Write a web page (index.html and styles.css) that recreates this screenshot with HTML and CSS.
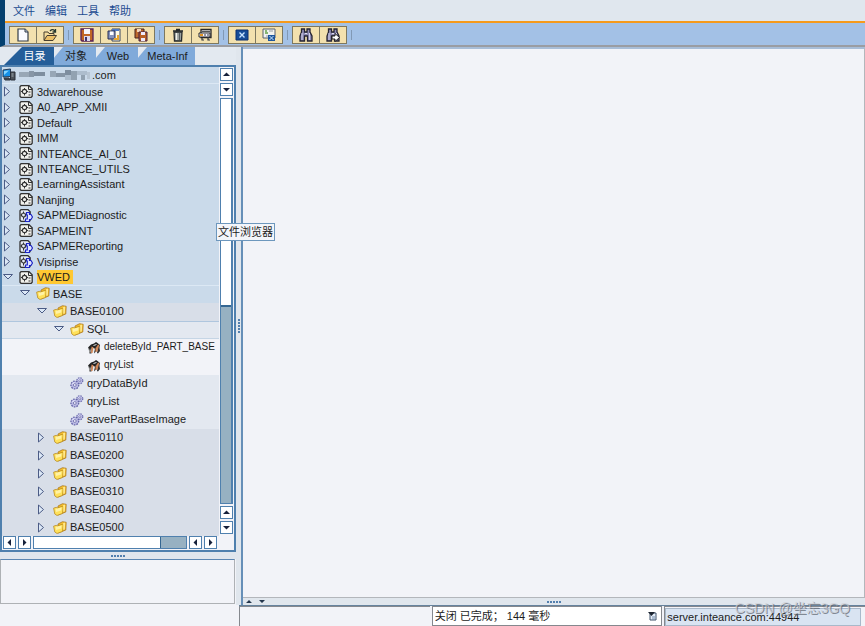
FILE: index.html
```
<!DOCTYPE html>
<html lang="zh-CN">
<head>
    <meta charset="UTF-8">
    <meta name="viewport" content="width=device-width, initial-scale=1.0">
    <title>Workbench</title>
    <link rel="stylesheet" href="styles.css">
</head>
<body>

    <!-- shared icons -->
    <svg class="defs" aria-hidden="true">
        <symbol id="right" viewBox="0 0 10 11"><path d="M1.500 1v9l5-4.500z" fill="#dce8f6" stroke="#4b5b85"/></symbol>
        <symbol id="down" viewBox="0 0 10 11"><path d="M.5 2.500h9l-4.500 4.500z" fill="#dce8f6" stroke="#4b5b85"/></symbol>
        <symbol id="project" viewBox="0 0 14 13">
            <path d="M2 .7h8l3.200 3v7.600l-1 1H2l-1-1V1.700z" fill="#f1f1ec" stroke="#333" stroke-width="1.300"/>
            <path d="M9.500 1v3.500H13" fill="none" stroke="#333"/>
            <circle cx="5.500" cy="6.500" r="2.200" fill="none" stroke="#333" stroke-width="1.200"/>
            <path d="M5.500 3v2M5.500 8v2.500M2 6.500h2M7 6.500h2M9.500 7h2M9.500 10h2" stroke="#333"/>
        </symbol>
        <symbol id="module" viewBox="0 0 14 13">
            <path d="M2 .7h7l2.200 2v8.600l-1 1H2l-1-1V1.700z" fill="#e6eaf5" stroke="#333" stroke-width="1.300"/>
            <circle cx="4.500" cy="6" r="2" fill="none" stroke="#333" stroke-width="1.200"/>
            <path d="M4.500 2.500v2M4.500 8v2.500M1.500 6h1.500" stroke="#333"/>
            <path d="M7.500 3.500h3v2h1.500l1.500 2.500-1.500 2.500h-1.500v2H6.500V10h1.800V6H7.500z" fill="#dfe4ff" stroke="#1d25c4" stroke-width="1.200"/>
        </symbol>
        <symbol id="folder" viewBox="0 0 14 13">
            <path d="M5 3l4.500-2.300 3.700.6-.4 7.700L5 12z" fill="#f3bd2c" stroke="#a36f14" stroke-width=".7"/>
            <path d="M.6 5.200l2.600-.9 1 .7 5-1.600.9.800-.5 6.200L4 12.500 1.800 11z" fill="#ffe15a" stroke="#b38319" stroke-width=".7"/>
            <path d="M10.200 2l2-.4-.4 6.600-1.500.8z" fill="#ffe98c"/>
            <path d="M2.500 6l6-1.500-.3 3L3 9z" fill="#fff2a6"/>
        </symbol>
        <symbol id="query" viewBox="0 0 14 13">
            <path d="M1 6.500l3-3 3-1 2-1.500 1.500 1L13 4l-1 3-4 .5-2-.5-3.500 1z" fill="#222"/>
            <path d="M1.500 7h3v5.500h-2zM8 6l4-2 1 6-2 2.500-1-.5.500-3-3.500 3.500z" fill="#333"/>
            <path d="M4.500 5.500l2 .7-1 5.800H4zM8.500 7.500l2.500-4 1.200.6-1.700 6.400-2 .5z" fill="#d28757"/>
            <path d="M6.500 4.500l3-1M3 8.500v3M7.200 8l-.7 2.500" stroke="#e4e4e4" fill="none"/>
        </symbol>
        <symbol id="gears" viewBox="0 0 14 13">
            <circle cx="9.800" cy="3.700" r="3" fill="#bfbfe8" stroke="#6767a8" stroke-width="1.200" stroke-dasharray="1.400 1"/>
            <circle cx="4.800" cy="8" r="3.900" fill="#b9b9e4" stroke="#6767a8" stroke-width="1.300" stroke-dasharray="1.600 1.100"/>
            <path d="M2.500 7l2-1.500M8.500 3l1.500-1" stroke="#e9e9ff" stroke-width="1.200"/>
            <circle cx="9.800" cy="3.700" r="1" fill="#f0f0ff" stroke="#6a6aa5" stroke-width=".7"/>
            <circle cx="4.800" cy="8" r="1.400" fill="#f4f4ff" stroke="#6a6aa5" stroke-width=".8"/>
        </symbol>
        <symbol id="server" viewBox="0 0 14 13">
            <path d="M1 2l7.500-1v7.500L1 9z" fill="#1590e8" stroke="#263b55"/>
            <path d="M2 3l5-.6L2 7z" fill="#84d4ff"/>
            <path d="M8.500 4H13v8H8.500zM2 10h5l1 2H3z" fill="#4b5158" stroke="#292f39"/>
            <path d="M9.500 6h2M9.500 8h2" stroke="#a5b0b8"/>
        </symbol>
        <symbol id="floppy" viewBox="0 0 14 14">
            <path d="M1 1h12v12H2L1 12z" fill="#c26624" stroke="#56205a" stroke-width="1.300"/>
            <path d="M4 1h6v5H4z" fill="#f7f5fa"/><path d="M4 8h6v5H4z" fill="#ddd9ef"/><path d="M5 9h2v4H5z" fill="#403467"/>
        </symbol>
        <symbol id="binoculars" viewBox="0 0 14 14">
            <path d="M2.500 1h3v3H8V1h3v3l2 4v5H8.500V8h-3v5H1V8l1.500-4z" fill="#8f8cb5" stroke="#252332" stroke-width="1.300"/>
            <path d="M3 5v7M10.500 5v7" stroke="#d3d1ea"/><path d="M6 5.500h2" stroke="#e2e1ef"/>
        </symbol>
    </svg>

    <header class="header">
        <nav class="menu">
            <a href="#">文件</a>
            <a href="#">编辑</a>
            <a href="#">工具</a>
            <a href="#">帮助</a>
        </nav>
        <div class="toolbar">
            <div class="group">
                <button aria-label="新建"><svg viewBox="0 0 14 14"><path d="M2 1h7l3 3v9H2z" fill="#f9fbff" stroke="#333c48" stroke-width="1.200"/><path d="M9 1v3h3" fill="#bccce0" stroke="#333c48"/></svg></button>
                <button aria-label="打开"><svg viewBox="0 0 14 14"><path d="M1 12V4h4l1 1.500h5V8" fill="#f5dc9c" stroke="#473e30"/><path d="M1 12.500l3-5h9.500l-3.500 5z" fill="#ecbf67" stroke="#473e30"/><path d="M7 3c2-2 3-2 5 0M12.500 1v3h-3" fill="none" stroke="#26372f" stroke-width="1.300"/></svg></button>
            </div>
            <div class="group">
                <button aria-label="保存"><svg><use href="#floppy"/></svg></button>
                <button aria-label="另存为"><svg viewBox="0 0 14 14"><path d="M5 1h8v12H5z" fill="#fffbe7" stroke="#394661"/><path d="M5 2h7" stroke="#517bc5" stroke-width="2"/><path d="M1 3h7v8H1z" fill="#8794bc" stroke="#252c55"/><path d="M3 3.500h3.500V7H3z" fill="#fff"/><path d="M10 7h2v5H7v-2h3z" fill="#e8a62d"/></svg></button>
                <button aria-label="全部保存"><svg viewBox="0 0 14 14"><path d="M1 1h9v9H1z" fill="#bd692d" stroke="#45231c"/><path d="M3 1h4v3H3z" fill="#f3d7bb"/><path d="M5 4h8v9H5z" fill="#b85f24" stroke="#432044"/><path d="M7 4h4v3H7zM7 10h4v3H7z" fill="#eee9fb"/></svg></button>
            </div>
            <div class="group">
                <button aria-label="删除"><svg viewBox="0 0 14 14"><path d="M3 4h8l-.5 9h-7z" fill="#9aa19f" stroke="#252a2d" stroke-width="1.300"/><path d="M2 3h10M5 1.500h4" stroke="#252a2d" stroke-width="1.400"/><path d="M5.500 5v7" stroke="#f2f2ec" stroke-width="1.300"/><path d="M8.500 5v7" stroke="#565d60"/></svg></button>
                <button aria-label="重命名"><svg viewBox="0 0 14 14"><path d="M3 1.500h10v8H3z" fill="#ddd" stroke="#292929" stroke-width="1.300"/><path d="M4 3.500h8" stroke="#555"/><path d="M1 5h11v4H1z" fill="#f6f4ff" stroke="#292929"/><path d="M2 6h3v2H2z" fill="#e3941e"/><path d="M6 7h2M9 7h2M4 10v2h2M10 9v3h2" stroke="#303640" fill="none" stroke-width="1.200"/></svg></button>
            </div>
            <div class="group">
                <button aria-label="关闭"><svg viewBox="0 0 14 14"><path d="M1 2h12v10H1z" fill="#164c98" stroke="#0b2f70"/><path d="M4.500 4.500l5 5M9.500 4.500l-5 5" stroke="#c7e3ff" stroke-width="1.400"/></svg></button>
                <button aria-label="全部关闭"><svg viewBox="0 0 14 14"><path d="M1 1h12v9H1z" fill="#f1f2ef" stroke="#58616c"/><path d="M3 3h2M3 5h3" stroke="#66a14b" stroke-width="1.300"/><path d="M7 3h4M4 8h3" stroke="#989fa7"/><path d="M6 7h7v6H6z" fill="#1c559b"/><path d="M7.500 8l4 4M11.500 8l-4 4" stroke="#c7e3ff"/></svg></button>
            </div>
            <div class="group">
                <button aria-label="查找"><svg><use href="#binoculars"/></svg></button>
                <button aria-label="查找下一个"><svg viewBox="0 0 14 14"><use href="#binoculars"/><path d="M6 8h3V5.500l4.500 4-4.500 4V11H6z" fill="#fff" stroke="#222"/></svg></button>
            </div>
        </div>
    </header>

    <main class="main">
        <aside class="sidebar">
            <div class="tabs" role="tablist">
                <button class="tab active" role="tab" aria-selected="true">目录</button>
                <button class="tab" role="tab">对象</button>
                <button class="tab" role="tab">Web</button>
                <button class="tab wide" role="tab">Meta-Inf</button>
            </div>

            <div class="browser">
                <div class="view">
                    <div class="server">
                        <svg class="icon"><use href="#server"/></svg>
                        <svg class="mask" viewBox="0 0 73 12">
                            <path d="M0 3h10v5H0zM31 2h6v6h-6z" fill="#98a7b6"/>
                            <path d="M10 2h5v6h-5zM37 4h9v4h-9z" fill="#8796a6"/>
                            <path d="M15 3h11v4H15zM46 1h6v5h-6z" fill="#7e8e9f"/>
                            <path d="M46 6h6v5h-6zM58 2h10v4H58z" fill="#adbdcd"/>
                            <path d="M52 2h6v9h-6zM62 6h4v5h-4z" fill="#92a2b1"/>
                            <path d="M68 3h3v7h-3z" fill="#b7c5d3"/>
                        </svg>
                        <span>.com</span>
                    </div>
                    <ul class="tree projects">
                        <li><svg class="arrow"><use href="#right"/></svg><svg class="icon"><use href="#project"/></svg><span>3dwarehouse</span></li>
                        <li><svg class="arrow"><use href="#right"/></svg><svg class="icon"><use href="#project"/></svg><span>A0_APP_XMII</span></li>
                        <li><svg class="arrow"><use href="#right"/></svg><svg class="icon"><use href="#project"/></svg><span>Default</span></li>
                        <li><svg class="arrow"><use href="#right"/></svg><svg class="icon"><use href="#project"/></svg><span>IMM</span></li>
                        <li><svg class="arrow"><use href="#right"/></svg><svg class="icon"><use href="#project"/></svg><span>INTEANCE_AI_01</span></li>
                        <li><svg class="arrow"><use href="#right"/></svg><svg class="icon"><use href="#project"/></svg><span>INTEANCE_UTILS</span></li>
                        <li><svg class="arrow"><use href="#right"/></svg><svg class="icon"><use href="#project"/></svg><span>LearningAssistant</span></li>
                        <li><svg class="arrow"><use href="#right"/></svg><svg class="icon"><use href="#project"/></svg><span>Nanjing</span></li>
                        <li><svg class="arrow"><use href="#right"/></svg><svg class="icon"><use href="#module"/></svg><span>SAPMEDiagnostic</span></li>
                        <li><svg class="arrow"><use href="#right"/></svg><svg class="icon"><use href="#project"/></svg><span>SAPMEINT</span></li>
                        <li><svg class="arrow"><use href="#right"/></svg><svg class="icon"><use href="#module"/></svg><span>SAPMEReporting</span></li>
                        <li><svg class="arrow"><use href="#right"/></svg><svg class="icon"><use href="#module"/></svg><span>Visiprise</span></li>
                        <li><svg class="arrow"><use href="#down"/></svg><svg class="icon"><use href="#project"/></svg><span class="selected">VWED</span></li>
                    </ul>
                    <ul class="tree folders">
                        <li class="level1"><svg class="arrow"><use href="#down"/></svg><svg class="icon"><use href="#folder"/></svg><span>BASE</span></li>
                        <li class="level2"><svg class="arrow"><use href="#down"/></svg><svg class="icon"><use href="#folder"/></svg><span>BASE0100</span></li>
                        <li class="level3 open"><svg class="arrow"><use href="#down"/></svg><svg class="icon"><use href="#folder"/></svg><span>SQL</span></li>
                        <li class="level4"><svg class="icon"><use href="#query"/></svg><span>deleteById_PART_BASE</span></li>
                        <li class="level4"><svg class="icon"><use href="#query"/></svg><span>qryList</span></li>
                        <li class="level3 leaf"><svg class="icon"><use href="#gears"/></svg><span>qryDataById</span></li>
                        <li class="level3 leaf"><svg class="icon"><use href="#gears"/></svg><span>qryList</span></li>
                        <li class="level3 leaf"><svg class="icon"><use href="#gears"/></svg><span>savePartBaseImage</span></li>
                        <li class="level2"><svg class="arrow"><use href="#right"/></svg><svg class="icon"><use href="#folder"/></svg><span>BASE0110</span></li>
                        <li class="level2"><svg class="arrow"><use href="#right"/></svg><svg class="icon"><use href="#folder"/></svg><span>BASE0200</span></li>
                        <li class="level2"><svg class="arrow"><use href="#right"/></svg><svg class="icon"><use href="#folder"/></svg><span>BASE0300</span></li>
                        <li class="level2"><svg class="arrow"><use href="#right"/></svg><svg class="icon"><use href="#folder"/></svg><span>BASE0310</span></li>
                        <li class="level2"><svg class="arrow"><use href="#right"/></svg><svg class="icon"><use href="#folder"/></svg><span>BASE0400</span></li>
                        <li class="level2"><svg class="arrow"><use href="#right"/></svg><svg class="icon"><use href="#folder"/></svg><span>BASE0500</span></li>
                    </ul>
                </div>
                <div class="scroll vertical">
                    <button aria-label="向上"><svg viewBox="0 0 7 7"><path d="M0 5h7L3.500 1.500z"/></svg></button>
                    <button aria-label="向下"><svg viewBox="0 0 7 7"><path d="M0 2h7L3.500 5.500z"/></svg></button>
                    <div class="track"><div class="thumb"></div></div>
                    <button aria-label="向上"><svg viewBox="0 0 7 7"><path d="M0 5h7L3.500 1.500z"/></svg></button>
                    <button aria-label="向下"><svg viewBox="0 0 7 7"><path d="M0 2h7L3.500 5.500z"/></svg></button>
                </div>
                <div class="scroll horizontal">
                    <button aria-label="向左"><svg viewBox="0 0 7 7"><path d="M5 0v7L1.500 3.500z"/></svg></button>
                    <button aria-label="向右"><svg viewBox="0 0 7 7"><path d="M2 0v7l3.500-3.500z"/></svg></button>
                    <div class="track"><div class="thumb"></div></div>
                    <button aria-label="向左"><svg viewBox="0 0 7 7"><path d="M5 0v7L1.500 3.500z"/></svg></button>
                    <button aria-label="向右"><svg viewBox="0 0 7 7"><path d="M2 0v7l3.500-3.500z"/></svg></button>
                </div>
                <div class="tooltip" role="tooltip">文件浏览器</div>
            </div>

            <div class="splitter"><i class="grip"></i></div>
            <div class="preview"></div>
        </aside>

        <section class="workspace">
            <div class="upper">
                <div class="divider"><i class="grip"></i></div>
                <div class="content">
                    <div class="editor"></div>
                    <div class="splitter">
                        <svg class="toggles" viewBox="0 0 20 5"><path d="M1 4h6L4 1zM14 1h6l-3 3z" fill="#24364c"/></svg>
                        <i class="grip"></i>
                    </div>
                </div>
            </div>
            <footer class="status">
                <div class="cell blank"></div>
                <div class="cell message">
                    <input type="text" aria-label="状态" value="关闭 已完成； 144 毫秒" readonly>
                    <button aria-label="历史"><svg viewBox="0 0 9 10"><path d="M2 2h6v7H2z" fill="#e4edf8" stroke="#41536b"/><path d="M0 1h7L3.500 5z" fill="#1c2430"/><path d="M4 6h3M4 8h3" stroke="#758caa"/></svg></button>
                </div>
                <div class="cell host"><span>server.inteance.com:44944</span></div>
            </footer>
        </section>
    </main>

    <div class="watermark">CSDN @坐忘3GQ</div>

</body>
</html>
```
FILE: styles.css
```
* {
    box-sizing: border-box;
}
body {
    display: flex;
    flex-direction: column;
    height: 100vh;
    margin: 0;
    overflow: hidden;
    background-color: #f2f3f8;
    color: #1c1c1c;
    font-family: "Liberation Sans", "Noto Sans CJK SC", sans-serif;
    font-size: 11px;
    line-height: 14px;
}
button {
    display: flex;
    align-items: center;
    justify-content: center;
    margin: 0;
    padding: 0;
    border: none;
    color: inherit;
    font: inherit;
}
.defs {
    position: absolute;
    width: 0;
    height: 0;
}

/* menu and toolbar */
.header {
    border-left: 5px solid #04406f;
    border-bottom: 2px solid #9a9da3;
    background-color: #a3c1e6;
}
.menu {
    display: flex;
    gap: 10px;
    height: 23px;
    padding: 4px 8px;
    border-bottom: 2px solid #f59a1c;
    background-color: #e0e7ee;
}
.menu a {
    color: #1d4c91;
    text-decoration: none;
    white-space: nowrap;
}
.toolbar {
    display: flex;
    padding: 3px 4px 1px;
}
.group {
    display: flex;
    align-items: center;
}
.group::after {
    content: "";
    width: 1px;
    height: 10px;
    margin: 0 4px;
    background-color: #8199b5;
}
.toolbar button {
    width: 28px;
    height: 18px;
    margin-right: -1px;
    border: 1px solid #7d7860;
    background-color: #f3e1ae;
}
.toolbar button:last-child {
    margin-right: 0;
}
.toolbar svg {
    width: 14px;
    height: 14px;
}

.main {
    display: flex;
    flex: 1;
    min-height: 0;
}
.sidebar {
    display: flex;
    flex-direction: column;
    width: 236px;
    padding-bottom: 22px;
}

/* tabs */
.tabs {
    display: flex;
    height: 18px;
    background-color: #e3e9f0;
}
.tab {
    width: 42px;
    padding-left: 2px;
    background-color: #80aada;
    clip-path: polygon(0 100%, 0 60%, 9px 0, 100% 0, 100% 100%);
}
.tab.active {
    width: 54px;
    padding-left: 15px;
    background-color: #245e99;
    color: #fff;
    clip-path: polygon(4px 100%, 22px 0, 100% 0, 100% 100%);
}
.tab.wide {
    width: 57px;
}

/* file browser */
.browser {
    position: relative;
    display: grid;
    grid-template-columns: 1fr 15px;
    grid-template-rows: 1fr 14px;
    flex: 1;
    min-height: 0;
    border: 2px solid #4f80ae;
    background-color: #f2f3f8;
}
.view {
    min-width: 0;
    overflow: hidden;
    background-color: #cadaea;
}
.server {
    display: flex;
    align-items: center;
    height: 17px;
    padding-bottom: 1px;
    border-bottom: 1px solid #dce8f4;
}
.mask {
    width: 73px;
    height: 12px;
    margin-left: 3px;
}
.icon {
    flex: none;
    width: 14px;
    height: 13px;
}
.tree {
    margin: 0;
    padding: 0;
    list-style: none;
}
.tree li {
    display: flex;
    align-items: center;
    padding-left: 1px;
    white-space: nowrap;
}
.tree .icon {
    margin-right: 4px;
}
.arrow {
    flex: none;
    width: 10px;
    height: 11px;
    margin-right: 6px;
}
.projects {
    display: grid;
    grid-auto-rows: 1fr;
    height: 201px;
}
.selected {
    padding-right: 3px;
    background-color: #ffc832;
}
.folders li {
    height: 18px;
    padding-bottom: 2px;
}
.folders .icon {
    margin-right: 3px;
}
.folders .level1 {
    padding-left: 18px;
    border-top: 1px solid #dce8f4;
}
.folders .level2 {
    padding-left: 35px;
    background-color: #d8dee8;
}
.folders .level3 {
    padding-left: 52px;
    background-color: #e3e8f0;
}
.folders .open {
    border-top: 1px solid #afc6de;
    border-bottom: 1px solid #c5d5e5;
}
.folders .leaf {
    padding-left: 68px;
}
.folders .level4 {
    padding-left: 85px;
    background-color: #f2f3f8;
    font-size: 10px;
}

/* scrollbars */
.scroll {
    display: flex;
    gap: 2px;
}
.vertical {
    flex-direction: column;
    padding: 1px 0 2px 1px;
}
.horizontal {
    padding: 0 2px 1px 1px;
}
.scroll button {
    flex: none;
    width: 13px;
    height: 13px;
    border: 1px solid #4f80ae;
    background-color: #fff;
}
.scroll button svg {
    width: 7px;
    height: 7px;
    fill: #16203a;
}
.track {
    display: flex;
    flex: 1;
    border: 1px solid #4f80ae;
    background-color: #fff;
}
.vertical .track {
    align-items: flex-end;
    width: 13px;
    border-right-width: 2px;
}
.horizontal .track {
    justify-content: flex-end;
}
.thumb {
    background-color: #97b1c2;
}
.vertical .thumb {
    width: 100%;
    height: 49%;
    border-top: 2px solid #356792;
}
.horizontal .thumb {
    width: 17%;
    border-left: 1px solid #356792;
}

.tooltip {
    position: absolute;
    top: 156px;
    left: 214px;
    z-index: 1;
    padding: 1px;
    border: 1px solid #6d97bd;
    background-color: #f3f5fa;
    white-space: nowrap;
}

/* splitters */
.splitter {
    position: relative;
    display: flex;
    align-items: center;
    justify-content: center;
    height: 7px;
    background-color: #e0e6ed;
}
.grip {
    width: 15px;
    height: 2px;
    background: repeating-linear-gradient(90deg, #527fae 0 2px, transparent 2px 3px);
}
.preview {
    height: 45px;
    margin-right: 1px;
    border: 1px solid #aeb1b5;
    border-top: 1px solid #5b86b2;
}
.workspace {
    display: flex;
    flex-direction: column;
    flex: 1;
    min-width: 0;
}
.upper {
    display: flex;
    flex: 1;
}
.divider {
    display: flex;
    align-items: center;
    justify-content: center;
    width: 7px;
    border-right: 2px solid #668fb8;
    background-color: #e0e6ed;
}
.divider .grip {
    flex: none;
    width: 2px;
    height: 15px;
    background: repeating-linear-gradient(#527fae 0 2px, transparent 2px 3px);
}
.content {
    display: flex;
    flex-direction: column;
    flex: 1;
}
.editor {
    flex: 1;
    border: 1px solid #b3b6bb;
    border-top: 2px solid #a8bed8;
    border-left: none;
}
.toggles {
    position: absolute;
    top: 1px;
    left: 2px;
    width: 20px;
    height: 5px;
}

/* status bar */
.status {
    display: flex;
    gap: 2px;
    height: 21px;
    margin-left: 3px;
    border-top: 1px solid #66839e;
}
.cell {
    display: flex;
    align-items: center;
    border-top: 1px solid #85888e;
    border-left: 1px solid #85888e;
}
.blank {
    flex: 190;
}
.message {
    flex: 225;
    padding-right: 4px;
    border: 1px solid #85888e;
    background-color: #fff;
}
.message input {
    flex: 1;
    min-width: 0;
    padding: 0 2px;
    border: none;
    background-color: transparent;
    color: inherit;
    font: inherit;
}
.message button {
    background-color: transparent;
}
.message button svg {
    width: 9px;
    height: 10px;
}
.host {
    flex: 200;
}
.host span {
    flex: 1;
    margin-right: 4px;
    padding: 1px;
    border: 1px solid #a9b9ca;
    background-color: #d9e4f2;
}

.watermark {
    position: absolute;
    right: 15px;
    bottom: 8px;
    color: rgba(205, 209, 216, 0.7);
    font-size: 14px;
    line-height: 20px;
    text-shadow: 1px 1px 0 rgba(90, 96, 106, 0.7);
}
```
